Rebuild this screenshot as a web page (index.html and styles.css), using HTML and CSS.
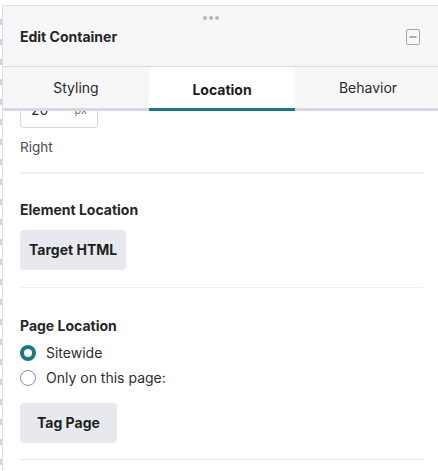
FILE: index.html
```html
<!DOCTYPE html>
<html>
<head lang="en">
    <meta charset="UTF-8">
    <title>Edit Container</title>
    <link rel="stylesheet" href="styles.css">
</head>
<body>
<div class="page">
    <div class="page-edge"></div>
    <div class="editor">
        <div class="editor-header">
            <span class="drag-dots"><i></i><i></i><i></i></span>
            <h1 class="editor-title">Edit Container</h1>
            <a href="javascript:void(0);" class="collapse-btn">
                <svg width="14" height="16" viewBox="0 0 14 16">
                    <rect x="0.5" y="0.5" width="13" height="15" rx="1.5" fill="none" stroke="#a3a3a8"/>
                    <line x1="3.5" y1="8" x2="10.5" y2="8" stroke="#8e8e94" stroke-width="1.4"/>
                </svg>
            </a>
        </div>
        <div class="editor-tabs">
            <a href="javascript:void(0);" class="tab">Styling</a>
            <a href="javascript:void(0);" class="tab active">Location</a>
            <a href="javascript:void(0);" class="tab">Behavior</a>
        </div>
        <div class="editor-body">
            <div class="body-scroll">
                <div class="offset-input">
                    <span class="val">20</span>
                    <span class="unit">px</span>
                </div>
                <div class="offset-label">Right</div>

                <div class="section">
                    <h2 class="section-title">Element Location</h2>
                    <a href="javascript:void(0);" class="btn">Target HTML</a>
                </div>

                <div class="section">
                    <h2 class="section-title">Page Location</h2>
                    <label class="radio"><span class="radio-dot checked"></span>Sitewide</label>
                    <label class="radio"><span class="radio-dot"></span>Only on this page:</label>
                    <a href="javascript:void(0);" class="btn btn-tag">Tag Page</a>
                </div>
            </div>
        </div>
    </div>
</div>
</body>
</html>
```

FILE: styles.css
```css
html, body {
    margin: 0;
    padding: 0;
    height: 100%;
    overflow: hidden;
}
body {
    font-family: "Inter", "Lato", sans-serif;
    color: #222;
    background: #ffffff;
    line-height: 18px;
}
h1, h2 {
    margin: 0;
    padding: 0;
}
a {
    text-decoration: none;
    color: #222;
}
.page {
    display: flex;
    height: 100%;
    padding-top: 5px;
    box-sizing: border-box;
}
.page-edge {
    width: 2px;
    flex: none;
    background: repeating-linear-gradient(to bottom, #fff 0px, #fff 14px, #d9d2ee 14px, #d9d2ee 20px);
}
.editor {
    width: 438px;
    flex: none;
    border-top: 1px solid #dedde6;
    border-left: 1px solid #dcdce2;
    background: #ffffff;
    display: flex;
    flex-direction: column;
}
.editor-header {
    position: relative;
    height: 60px;
    background: #f7f7f7;
    border-bottom: 1px solid #dcdce3;
    display: flex;
    align-items: center;
    padding: 0 19px 0 17px;
}
.drag-dots {
    position: absolute;
    top: 10px;
    left: 200px;
    display: flex;
    gap: 2px;
}
.drag-dots i {
    width: 4px;
    height: 4px;
    border-radius: 2px;
    background: #b5b7be;
}
.editor-title {
    flex: 1;
    font-size: 14px;
    font-weight: 700;
    color: #25252a;
    padding-top: 1px;
}
.collapse-btn {
    display: flex;
    margin-right: 2px;
    margin-top: 2px;
}
.editor-tabs {
    display: flex;
    height: 41px;
    background: #f7f7f7;
    border-bottom: 3px solid #d6d7e0;
}
.tab {
    width: 146px;
    display: flex;
    align-items: center;
    justify-content: center;
    font-size: 14px;
    color: #2a2a2e;
    padding-top: 1px;
}
.tab.active {
    background: #ffffff;
    font-weight: 700;
    color: #1d1d20;
    box-shadow: inset 0 -3px 0 #1c7787;
    margin-bottom: -3px;
}
.editor-body {
    flex: 1;
    overflow: hidden;
    padding: 0 17px;
}
.body-scroll {
    margin-top: -19px;
}
.offset-input {
    width: 78px;
    height: 36px;
    border: 1px solid #d6d6dc;
    border-radius: 4px;
    display: flex;
    align-items: center;
    padding: 0 10px;
    box-sizing: border-box;
    font-size: 14px;
    color: #333;
}
.offset-input .val {
    flex: 1;
}
.offset-input .unit {
    font-size: 11px;
    color: #777;
}
.offset-label {
    font-size: 13.5px;
    color: #4a4a4f;
    margin-top: 10px;
    padding-bottom: 16px;
}
.section {
    border-top: 2px solid #efeff3;
    padding: 27px 0 16px 0;
    margin-right: 1px;
}
.section + .section {
    border-top-width: 1px;
    border-bottom: 1px solid #e6e6ea;
    padding-top: 29px;
    margin-top: 1px;
    padding-bottom: 16px;
}
.section-title {
    font-size: 14px;
    font-weight: 700;
    color: #26262b;
    margin-bottom: 11px;
}
.btn {
    display: inline-block;
    background: #e8e9ee;
    border-radius: 4px;
    font-size: 14px;
    font-weight: 700;
    color: #1f1f23;
    padding: 11px 9px 11px 9px;
    line-height: 18px;
}
.btn-tag {
    margin-top: 13px;
    padding: 11px 17px 11px 17px;
}
.radio {
    display: flex;
    align-items: center;
    font-size: 14px;
    color: #2d2d31;
    height: 25px;
    margin-top: -6px;
}
.radio + .radio {
    margin-top: 0;
}
.radio-dot {
    width: 14px;
    height: 14px;
    border: 1px solid #8c8c92;
    border-radius: 50%;
    margin-right: 10px;
    background: #fff;
}
.radio-dot.checked {
    width: 8px;
    height: 8px;
    border: 4px solid #1c7787;
}
```
